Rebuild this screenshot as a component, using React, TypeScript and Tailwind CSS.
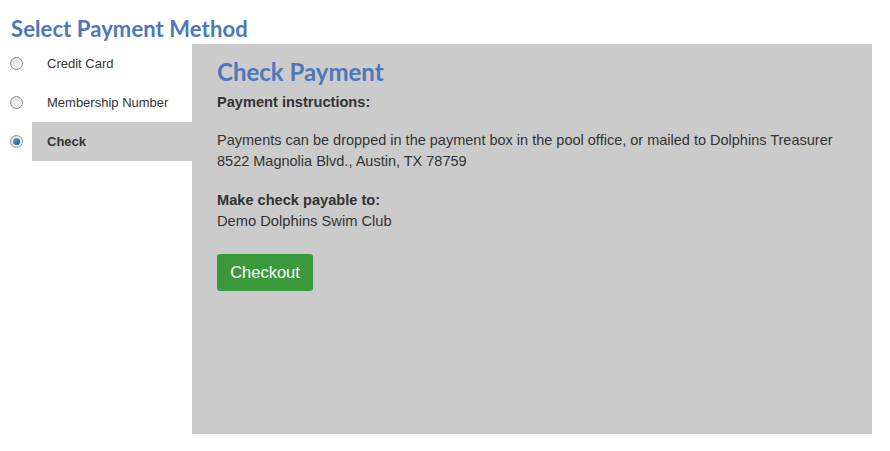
import { useState } from 'react'

const methods = [
  { id: 'card', label: 'Credit Card' },
  { id: 'member', label: 'Membership Number' },
  { id: 'check', label: 'Check' },
]

function Radio({ checked }: { checked: boolean }) {
  return (
    <span className="flex h-[13px] w-[13px] shrink-0 items-center justify-center rounded-full border border-[#8f8f8f] bg-gradient-to-br from-[#dcdcdc] to-[#fbfbfb]">
      {checked ? <span className="h-[7px] w-[7px] rounded-full bg-gradient-to-br from-[#5fb3e8] to-[#0f4f86]" /> : null}
    </span>
  )
}

export default function App() {
  const [method, setMethod] = useState('check')

  return (
    <div className="min-h-[451px] w-[890px] bg-white font-['Liberation_Sans',Arial,sans-serif] text-[#333]">
      <h1 className="pl-[11px] pt-[16px] font-['Lato',sans-serif] text-[22px] font-bold leading-[26px] tracking-[0.1px] text-[#4c77ba]">
        Select Payment Method
      </h1>

      <div className="mt-[2px] flex">
        <ul className="w-[192px] shrink-0">
          {methods.map((item) => {
            const active = item.id === method
            return (
              <li className="flex h-[39px] items-center" key={item.id}>
                <button className="flex w-[32px] justify-center pl-[1px]" onClick={() => setMethod(item.id)} type="button">
                  <Radio checked={active} />
                </button>
                <button
                  className={`flex h-full flex-1 items-center pl-[15px] text-left text-[13px] ${active ? 'bg-[#cbcbcb] font-bold' : ''}`}
                  onClick={() => setMethod(item.id)}
                  type="button"
                >
                  {item.label}
                </button>
              </li>
            )
          })}
        </ul>

        <section className="h-[390px] w-[680px] bg-[#cbcbcb] px-[25px] pt-[14px]">
          <h2 className="font-['Lato',sans-serif] text-[24px] font-bold leading-[28px] text-[#4c77ba]">Check Payment</h2>
          <p className="mt-[6px] text-[14.6px] font-bold leading-[20px]">Payment instructions:</p>
          <p className="mt-[18px] text-[14.5px] leading-[21px]">
            Payments can be dropped in the payment box in the pool office, or mailed to Dolphins Treasurer
            <br />
            8522 Magnolia Blvd., Austin, TX 78759
          </p>
          <p className="mt-[18px] text-[14.6px] font-bold leading-[21px]">Make check payable to:</p>
          <p className="text-[14.7px] leading-[21px]">Demo Dolphins Swim Club</p>
          <button className="mt-[22px] h-[37px] w-[96px] rounded-[3px] bg-[#3a9a3b] text-[16.5px] text-white" type="button">
            Checkout
          </button>
        </section>
      </div>
    </div>
  )
}
